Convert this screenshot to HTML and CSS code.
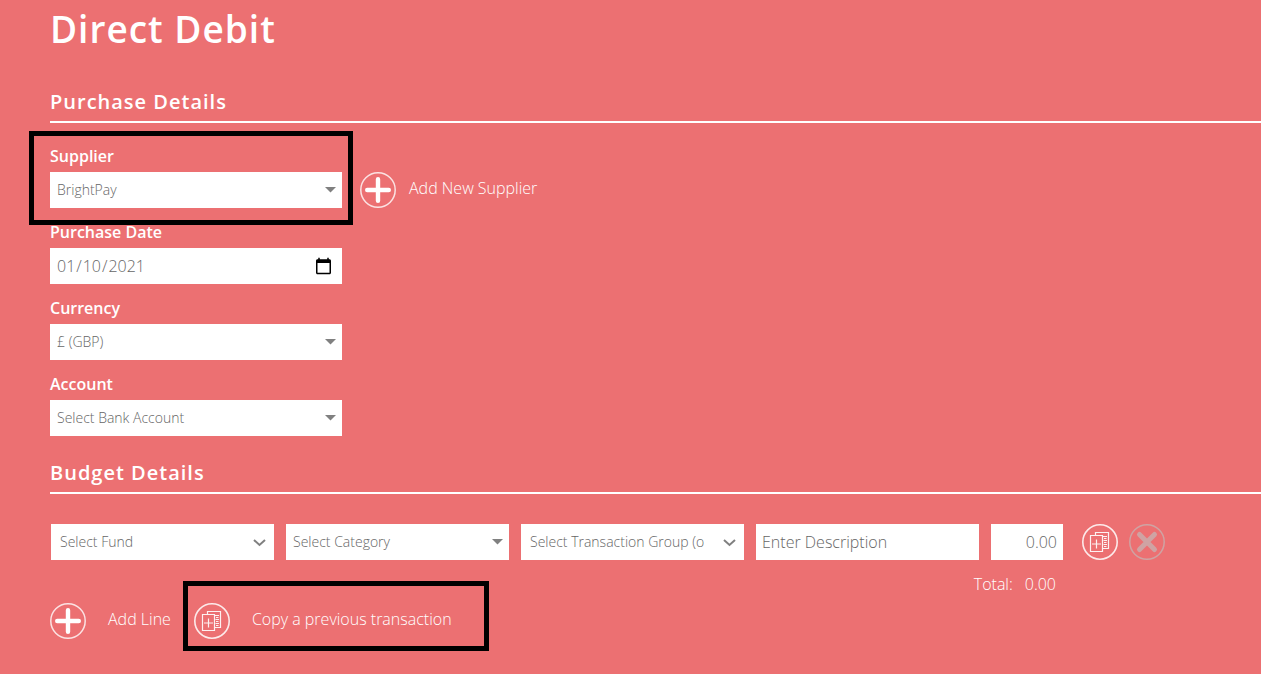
FILE: index.html
```html
<!DOCTYPE html>
<html lang="en">
<head>
    <meta charset="UTF-8">
    <meta name="viewport" content="width=device-width, initial-scale=1.0">
    <title>Direct Debit</title>
    <link rel="stylesheet" href="styles.css">
</head>
<body>
    <!-- Shared icons -->
    <svg class="sprite" aria-hidden="true">
        <symbol id="icon-add" viewBox="0 0 36 36">
            <circle cx="18" cy="18" r="17.2" fill="none" stroke="currentColor" stroke-width="1.5" opacity="0.8"/>
            <path d="M18 7.200v21.600M7.200 18h21.600" stroke="currentColor" stroke-width="4.4" stroke-linecap="round"/>
        </symbol>
        <symbol id="icon-copy" viewBox="0 0 36 36">
            <circle cx="18" cy="18" r="17.2" fill="none" stroke="currentColor" stroke-width="1.6" opacity="0.85"/>
            <path d="M13.500 11.500v-3h13v16h-5.500M8.500 11.500h12v16h-12zM14.500 15.500v9M10 20h9" fill="none" stroke="currentColor" stroke-width="1.2" opacity="0.9"/>
            <path d="M21 12.500h4M22 14.500h2.500M21.500 16.500h3.500M22 18.500h2.500M21.500 20.500h3.500M22 22.500h2.500" stroke="currentColor" stroke-width="1.1" opacity="0.9"/>
        </symbol>
        <symbol id="icon-remove" viewBox="0 0 36 36">
            <circle cx="18" cy="18" r="17.2" fill="none" stroke="currentColor" stroke-width="1.5"/>
            <path d="M10.500 10.500l15 15M25.500 10.500l-15 15" stroke="currentColor" stroke-width="5" stroke-linecap="round"/>
        </symbol>
        <symbol id="icon-caret" viewBox="0 0 14 14">
            <path d="M2 4h11l-5.500 5.500z" fill="currentColor"/>
        </symbol>
        <symbol id="icon-chevron" viewBox="0 0 14 14">
            <path d="M1 5l5.500 5 5.500-5" fill="none" stroke="currentColor" stroke-width="2"/>
        </symbol>
    </svg>

    <main>
        <h1>Direct Debit</h1>

        <form id="directDebitForm">
            <section>
                <h2>Purchase Details</h2>

                <div class="fields">
                    <!-- Supplier -->
                    <div class="field-row">
                        <div class="field highlight highlight-supplier">
                            <label for="supplier">Supplier</label>
                            <div class="select">
                                <select id="supplier" name="supplier">
                                    <option>BrightPay</option>
                                </select>
                                <svg class="arrow"><use href="#icon-caret"/></svg>
                            </div>
                        </div>
                        <button type="button" class="action action-supplier">
                            <svg class="icon"><use href="#icon-add"/></svg>
                            <span>Add New Supplier</span>
                        </button>
                    </div>

                    <!-- Purchase date -->
                    <div class="field">
                        <label for="purchaseDate">Purchase Date</label>
                        <input type="date" id="purchaseDate" name="purchaseDate" value="2021-01-10">
                    </div>

                    <!-- Currency -->
                    <div class="field">
                        <label for="currency">Currency</label>
                        <div class="select">
                            <select id="currency" name="currency">
                                <option>£ (GBP)</option>
                            </select>
                            <svg class="arrow"><use href="#icon-caret"/></svg>
                        </div>
                    </div>

                    <!-- Account -->
                    <div class="field">
                        <label for="account">Account</label>
                        <div class="select">
                            <select id="account" name="account">
                                <option>Select Bank Account</option>
                            </select>
                            <svg class="arrow"><use href="#icon-caret"/></svg>
                        </div>
                    </div>
                </div>
            </section>

            <section>
                <h2>Budget Details</h2>

                <div class="budget">
                    <div class="select wide">
                        <select name="fund" aria-label="Fund">
                            <option>Select Fund</option>
                        </select>
                        <svg class="arrow"><use href="#icon-chevron"/></svg>
                    </div>
                    <div class="select">
                        <select name="category" aria-label="Category">
                            <option>Select Category</option>
                        </select>
                        <svg class="arrow"><use href="#icon-caret"/></svg>
                    </div>
                    <div class="select wide">
                        <select name="group" aria-label="Transaction group">
                            <option>Select Transaction Group (optional)</option>
                        </select>
                        <svg class="arrow"><use href="#icon-chevron"/></svg>
                    </div>
                    <input type="text" name="description" placeholder="Enter Description" aria-label="Description">
                    <input type="text" class="amount" name="amount" value="0.00" aria-label="Amount">
                    <div class="line-actions">
                        <button type="button" class="action" aria-label="Copy line">
                            <svg class="icon"><use href="#icon-copy"/></svg>
                        </button>
                        <button type="button" class="action remove" aria-label="Remove line" disabled>
                            <svg class="icon"><use href="#icon-remove"/></svg>
                        </button>
                    </div>
                    <p class="total"><span>Total:</span><span>0.00</span></p>
                </div>

                <div class="actions">
                    <button type="button" class="action">
                        <svg class="icon"><use href="#icon-add"/></svg>
                        <span>Add Line</span>
                    </button>
                    <div class="highlight highlight-copy">
                        <button type="button" class="action">
                            <svg class="icon"><use href="#icon-copy"/></svg>
                            <span>Copy a previous transaction</span>
                        </button>
                    </div>
                </div>
            </section>
        </form>
    </main>
</body>
</html>
```
FILE: styles.css
```css
* {
    box-sizing: border-box;
}

body {
    font-family: 'Open Sans', 'Noto Sans', sans-serif;
    font-size: 16px;
    font-weight: 300;
    background-color: #ec7072;
    color: white;
    margin: 0;
}

main {
    padding: 4px 0 20px 50px;
}

.sprite {
    display: none;
}

h1 {
    font-size: 37px;
    font-weight: 600;
    line-height: 50px;
    letter-spacing: 1px;
    margin: 0 0 32px;
}

h2 {
    font-size: 20px;
    font-weight: 600;
    line-height: 32px;
    letter-spacing: 1px;
    margin: 0;
    padding-bottom: 3px;
    border-bottom: 2px solid white;
}

/* Purchase details */
.fields {
    display: flex;
    flex-direction: column;
    gap: 12px;
    padding: 21px 0;
}

.field-row {
    display: flex;
    align-items: flex-end;
    gap: 18px;
}

.field {
    width: 292px;
}

label {
    display: block;
    font-weight: 600;
    line-height: 24px;
    margin-bottom: 4px;
}

input, select {
    display: block;
    width: 100%;
    height: 36px;
    padding: 0 6px;
    border: none;
    border-radius: 0;
    background-color: white;
    color: #666;
    font-family: inherit;
    font-size: 16px;
    font-weight: 300;
}

input::placeholder {
    color: #666;
}

input[type="date"] {
    padding-right: 9px;
}

input::-webkit-calendar-picker-indicator {
    width: 19px;
    height: 19px;
    padding: 0;
}

.select {
    position: relative;
}

.select select {
    appearance: none;
    font-size: 14px;
    padding: 0 40px 2px 7px;
}

.select.wide select {
    padding-left: 9px;
}

.arrow {
    position: absolute;
    right: 5px;
    top: 11px;
    width: 14px;
    height: 14px;
    color: #808080;
    pointer-events: none;
}

.wide .arrow {
    right: 7px;
}

/* Round icon buttons */
.action {
    display: flex;
    align-items: center;
    gap: 22px;
    padding: 0;
    border: none;
    background: none;
    color: white;
    font-family: inherit;
    font-size: 16px;
    font-weight: 300;
    cursor: pointer;
}

.action span {
    padding-bottom: 4px;
}

.action-supplier {
    gap: 13px;
}

.icon {
    width: 36px;
    height: 36px;
}

.remove {
    color: #cfa3a3;
    cursor: default;
}

/* Budget details */
.budget {
    display: grid;
    grid-template-columns: repeat(4, 1fr) 72px auto;
    gap: 12px;
    padding: 30px 96px 0 1px;
}

.amount {
    text-align: right;
}

.line-actions {
    display: flex;
    gap: 11px;
    margin-left: 7px;
}

.total {
    grid-column: 1 / 6;
    display: flex;
    justify-content: flex-end;
    gap: 12px;
    margin: 0;
    padding-right: 7px;
    line-height: 24px;
}

.actions {
    display: flex;
    gap: 23px;
    padding-top: 7px;
}

/* Black frames over the parts to look at */
.highlight {
    position: relative;
}

.highlight::after {
    content: "";
    position: absolute;
    border: 5px solid black;
    pointer-events: none;
}

.highlight-supplier::after {
    inset: -13px -11px -17px -21px;
}

.highlight-copy::after {
    inset: -22px -37px -12px -11px;
}
```
